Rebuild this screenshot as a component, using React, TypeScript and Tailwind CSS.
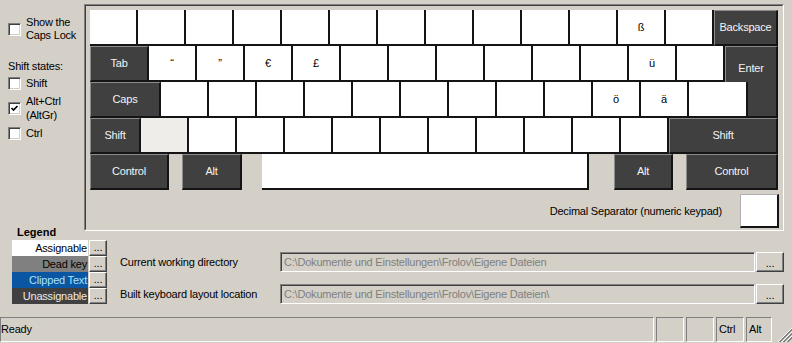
import React from "react";

type KP = { w: string; label?: React.ReactNode; light?: boolean; extra?: string };

function WhiteKey({ w, label, light, extra = "" }: KP) {
  return (
    <div
      className={`${w} ${extra} h-[36px] shrink-0 ${light ? "bg-[#eeede9]" : "bg-white"} border-r-2 border-b-2 border-r-[#141414] border-b-[#141414] flex items-center justify-center text-[11px] leading-[13px] text-black`}
    >
      {label}
    </div>
  );
}

function DarkKey({ w, label, extra = "" }: KP) {
  return (
    <div
      className={`${w} ${extra} h-[36px] shrink-0 bg-[#404040] border-t border-l border-r-2 border-b-2 border-t-[#8c8c8c] border-l-[#8c8c8c] border-r-[#141414] border-b-[#141414] flex items-center justify-center text-[11px] leading-[13px] text-[#f4f4f4]`}
    >
      {label}
    </div>
  );
}

function CheckBox({ checked }: { checked?: boolean }) {
  return (
    <div className="w-[13px] h-[13px] shrink-0 bg-white border-t border-l border-b border-r border-t-[#808080] border-l-[#808080] border-b-white border-r-white shadow-[inset_1px_1px_0_#404040,inset_-1px_-1px_0_#d4d0c8] flex items-center justify-center">
      {checked && (
        <svg width="9" height="9" viewBox="0 0 9 9">
          <path d="M1.5 4 L3.5 6 L7.5 2" stroke="#000" strokeWidth="1.7" fill="none" />
        </svg>
      )}
    </div>
  );
}

function DotsButton({ w, h }: { w: string; h: string }) {
  return (
    <div
      className={`${w} ${h} shrink-0 bg-[#d4d0c8] border-t border-l border-b border-r border-t-white border-l-white border-b-[#404040] border-r-[#404040] shadow-[inset_-1px_-1px_0_#808080] flex items-end justify-center pb-[2px] text-[11px] leading-[11px] text-black`}
    >
      ...
    </div>
  );
}

function Field({ text }: { text: string }) {
  return (
    <div className="w-[475px] h-[20px] shrink-0 bg-[#d4d0c8] border-t border-l border-b border-r border-t-[#808080] border-l-[#808080] border-b-white border-r-white shadow-[inset_1px_1px_0_#404040,inset_-1px_-1px_0_#d4d0c8] flex items-center pl-[3px] text-[11px] text-[#808080] whitespace-nowrap overflow-hidden">
      {text}
    </div>
  );
}

export default function App() {
  const row1 = Array.from({ length: 13 }, (_, i) => (i === 11 ? "ß" : ""));
  const row2 = ["\u201C", "\u201D", "€", "£", "", "", "", "", "", "", "ü", ""];
  const row3 = ["", "", "", "", "", "", "", "", "", "ö", "ä"];
  const row4 = Array.from({ length: 11 }, () => "");

  return (
    <div className="w-[792px] h-[343px] bg-[#d4d0c8] overflow-hidden font-['Liberation_Sans',Arial,sans-serif] text-[11px] leading-[13px] tracking-[-0.2px] text-black flex flex-col">
      {/* Top section */}
      <div className="flex h-[238px]">
        {/* Left options column */}
        <div className="w-[84px] shrink-0 flex flex-col pl-[8px]">
          <div className="mt-[16px] flex items-center gap-[5px]">
            <CheckBox />
            <div className="leading-[13px]">
              Show the
              <br />
              Caps Lock
            </div>
          </div>
          <div className="mt-[18px] leading-[13px]">Shift states:</div>
          <div className="mt-[4px] flex items-center gap-[5px] h-[13px]">
            <CheckBox />
            <span>Shift</span>
          </div>
          <div className="mt-[4px] flex items-center gap-[5px]">
            <CheckBox checked />
            <div className="leading-[14px]">
              Alt+Ctrl
              <br />
              (AltGr)
            </div>
          </div>
          <div className="mt-[5px] flex items-center gap-[5px] h-[13px]">
            <CheckBox />
            <span>Ctrl</span>
          </div>
          <div className="mt-[86px] ml-[9px] font-bold leading-[13px] tracking-normal">Legend</div>
        </div>

        {/* Keyboard panel */}
        <div className="w-[700px] h-[227px] mt-[4px] shrink-0 border-t border-l border-b border-r border-t-[#808080] border-l-[#808080] border-b-white border-r-white">
          <div className="w-full h-full border-t border-l border-b border-r border-t-[#404040] border-l-[#404040] border-b-[#d4d0c8] border-r-[#d4d0c8] pl-[4px] pt-[4px] flex flex-col">
            <div className="flex">
              {row1.map((l, i) => (
                <WhiteKey key={i} w="w-[48px]" label={l} />
              ))}
              <DarkKey w="w-[64px]" label="Backspace" />
            </div>
            <div className="flex">
              <DarkKey w="w-[59px]" label="Tab" />
              {row2.map((l, i) => (
                <WhiteKey key={i} w="w-[48px]" label={l} />
              ))}
              <div className="w-[53px] h-[36px] shrink-0 bg-[#404040] border-t border-l border-r-2 border-t-[#8c8c8c] border-l-[#8c8c8c] border-r-[#141414] flex justify-center pt-[15px] text-[11px] leading-[13px] text-[#f4f4f4]">
                Enter
              </div>
            </div>
            <div className="flex">
              <DarkKey w="w-[71px]" label="Caps" />
              {row3.map((l, i) => (
                <WhiteKey key={i} w="w-[48px]" label={l} />
              ))}
              <WhiteKey w="w-[59px]" />
              <div className="w-[30px] h-[36px] shrink-0 bg-[#404040] border-r-2 border-b-2 border-r-[#141414] border-b-[#141414]" />
            </div>
            <div className="flex">
              <DarkKey w="w-[51px]" label="Shift" />
              {row4.map((l, i) => (
                <WhiteKey key={i} w="w-[48px]" label={l} light={i === 0} />
              ))}
              <DarkKey w="w-[109px]" label="Shift" />
            </div>
            <div className="flex">
              <DarkKey w="w-[79px]" label="Control" />
              <DarkKey w="w-[60px]" label="Alt" extra="ml-[13px]" />
              <WhiteKey w="w-[327px]" extra="ml-[20px]" />
              <DarkKey w="w-[59px]" label="Alt" extra="ml-[25px]" />
              <DarkKey w="w-[92px]" label="Control" extra="ml-[13px]" />
            </div>
            <div className="flex items-center justify-end mt-[4px] pr-[3px] gap-[18px]">
              <span>Decimal Separator (numeric keypad)</span>
              <div className="w-[39px] h-[34px] bg-white border-t border-l border-r-2 border-b-2 border-t-[#b0b0b0] border-l-[#b0b0b0] border-r-[#141414] border-b-[#141414]" />
            </div>
          </div>
        </div>
      </div>

      {/* Bottom section */}
      <div className="flex mt-[2px] h-[64px]">
        <div className="ml-[12px] w-[95px] shrink-0 flex flex-col">
          {[
            { t: "Assignable", c: "bg-white text-black" },
            { t: "Dead key", c: "bg-[#808080] text-black" },
            { t: "Clipped Text", c: "bg-[#0a56a2] text-[#a8e4ff]" },
            { t: "Unassignable", c: "bg-[#404040] text-[#ececec]" },
          ].map((r) => (
            <div key={r.t} className="flex h-[16px] gap-[1px]">
              <div className={`w-[76px] h-[16px] ${r.c} flex items-center justify-end pr-[1px] text-[11px] whitespace-nowrap`}>
                {r.t}
              </div>
              <DotsButton w="w-[18px]" h="h-[16px]" />
            </div>
          ))}
        </div>
        <div className="ml-[13px] flex flex-col">
          <div className="flex items-center mt-[12px] h-[20px]">
            <div className="w-[160px] shrink-0">Current working directory</div>
            <Field text="C:\Dokumente und Einstellungen\Frolov\Eigene Dateien" />
            <div className="ml-[1px]">
              <DotsButton w="w-[28px]" h="h-[20px]" />
            </div>
          </div>
          <div className="flex items-center mt-[12px] h-[20px]">
            <div className="w-[160px] shrink-0">Built keyboard layout location</div>
            <Field text="C:\Dokumente und Einstellungen\Frolov\Eigene Dateien\" />
            <div className="ml-[1px]">
              <DotsButton w="w-[28px]" h="h-[20px]" />
            </div>
          </div>
        </div>
      </div>

      {/* Status bar */}
      <div className="mt-[12px] h-[27px] flex gap-[2px] pt-[1px] pb-[1px]">
        <div className="flex-1 border-t border-l border-b border-r border-t-[#808080] border-l-[#808080] border-b-white border-r-white flex items-center pl-[0px]">
          Ready
        </div>
        <div className="w-[28px] border-t border-l border-b border-r border-t-[#808080] border-l-[#808080] border-b-white border-r-white" />
        <div className="w-[28px] border-t border-l border-b border-r border-t-[#808080] border-l-[#808080] border-b-white border-r-white" />
        <div className="w-[28px] border-t border-l border-b border-r border-t-[#808080] border-l-[#808080] border-b-white border-r-white flex items-center pl-[2px]">
          Ctrl
        </div>
        <div className="w-[26px] border-t border-l border-b border-r border-t-[#808080] border-l-[#808080] border-b-white border-r-white flex items-center pl-[2px]">
          Alt
        </div>
        <div className="w-[18px] flex items-end justify-end">
          <svg width="14" height="14" viewBox="0 0 14 14">
            {[0, 4, 8].map((o) => (
              <g key={o}>
                <line x1={o} y1="14" x2="14" y2={o} stroke="#ffffff" strokeWidth="1" />
                <line x1={o + 1} y1="14" x2="14" y2={o + 1} stroke="#808080" strokeWidth="1" />
                <line x1={o + 2} y1="14" x2="14" y2={o + 2} stroke="#808080" strokeWidth="1" />
              </g>
            ))}
          </svg>
        </div>
      </div>
    </div>
  );
}
